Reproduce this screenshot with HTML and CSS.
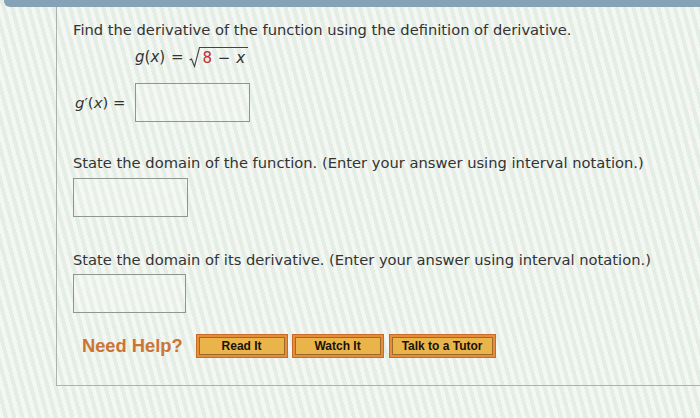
FILE: index.html
```html
<!DOCTYPE html>
<html>
<head>
<meta charset="utf-8">
<link rel="stylesheet" href="styles.css">
</head>
<body>
<div class="topbar"></div>
<div class="panel">
  <p class="q q1">Find the derivative of the function using the definition of derivative.</p>
  <div class="formula">
    <span class="it">g</span>(<span class="it">x</span>) = <span class="sqrt"><svg class="radical" width="11" height="21" viewBox="0 0 11 21"><path d="M0.5 13 L2.5 12 L5.5 19.5 L10.5 0.5 L11 0.5" fill="none" stroke="#444" stroke-width="1.1"/></svg><span class="radicand"><span class="red">8</span> − <span class="it">x</span></span></span>
  </div>
  <div class="answer-row">
    <span class="label"><span class="it">g</span>′(<span class="it">x</span>) =</span>
    <span class="box box-a"></span>
  </div>
  <p class="q q2">State the domain of the function. (Enter your answer using interval notation.)</p>
  <span class="box box-b"></span>
  <p class="q q3">State the domain of its derivative. (Enter your answer using interval notation.)</p>
  <span class="box box-c"></span>
  <div class="help">
    <span class="need">Need Help?</span>
    <span class="btn btn-read"><span>Read It</span></span>
    <span class="btn btn-watch"><span>Watch It</span></span>
    <span class="btn btn-tutor"><span>Talk to a Tutor</span></span>
  </div>
</div>
</body>
</html>
```
FILE: styles.css
```css
html, body {
  margin: 0;
  padding: 0;
}
body {
  width: 700px;
  height: 418px;
  overflow: hidden;
  background: #ecf1ec;
  background-image: repeating-linear-gradient(75deg, rgba(255,255,255,0.4) 0 4px, rgba(200,228,205,0.25) 4px 8px);
  font-family: "DejaVu Sans", Verdana, sans-serif;
  color: #333;
}
.topbar {
  height: 7px;
  margin-left: 4px;
  background: #86a2b6;
  border-bottom-left-radius: 6px;
}
.panel {
  margin-left: 56px;
  height: 379px;
  box-sizing: border-box;
  border-left: 1px solid #aab3ae;
  border-bottom: 1px solid #aab3ae;
  padding-left: 16px;
  display: flex;
  flex-direction: column;
  align-items: flex-start;
}
.q {
  margin: 0;
  font-size: 14.7px;
  line-height: 18px;
  white-space: nowrap;
}
.q1 { margin-top: 14px; }
.formula {
  margin-top: 8px;
  margin-left: 62px;
  font-size: 15px;
  line-height: 21px;
  height: 21px;
  white-space: nowrap;
  word-spacing: 1px;
  display: flex;
  align-items: flex-end;
}
.it { font-style: italic; }
.red { color: #c0302a; }
.sqrt {
  display: inline-flex;
  align-items: flex-start;
  margin-left: 6px;
  height: 21px;
}
.radical { display: block; }
.radicand {
  border-top: 1px solid #444;
  margin-top: 0;
  padding: 1px 3px 0 2px;
  line-height: 19px;
}
.answer-row {
  margin-top: 15px;
  display: flex;
  align-items: center;
  font-size: 14.9px;
}
.label {
  margin-left: 2px;
  width: 60px;
  white-space: nowrap;
}
.box {
  display: block;
  box-sizing: border-box;
  border: 1px solid #8f9691;
  background: rgba(255,255,255,0.15);
}
.box-a { width: 115px; height: 39px; }
.q2 { margin-top: 32px; }
.box-b { width: 115px; height: 39px; margin-top: 6px; }
.q3 { margin-top: 34px; }
.box-c { width: 113px; height: 39px; margin-top: 5px; }
.help {
  margin-top: 21px;
  margin-left: 9px;
  display: flex;
  align-items: center;
}
.need {
  font-family: "Liberation Sans", Arial, sans-serif;
  font-weight: bold;
  font-size: 18.3px;
  color: #cc7433;
  margin-right: 13px;
}
.btn {
  display: flex;
  box-sizing: border-box;
  height: 24px;
  border: 1px solid #c86a2c;
  background: #e98c3a;
  padding: 2px;
  margin-right: 4px;
}
.btn span {
  flex: 1;
  display: flex;
  align-items: center;
  justify-content: center;
  border: 1px solid #9a6a2a;
  background: #e9b54a;
  font-family: "Liberation Sans", Arial, sans-serif;
  font-weight: bold;
  font-size: 12px;
  color: #1a1208;
}
.btn-read { width: 92px; }
.btn-watch { width: 92px; }
.btn-tutor { width: 107px; margin-left: 1px; }
```
